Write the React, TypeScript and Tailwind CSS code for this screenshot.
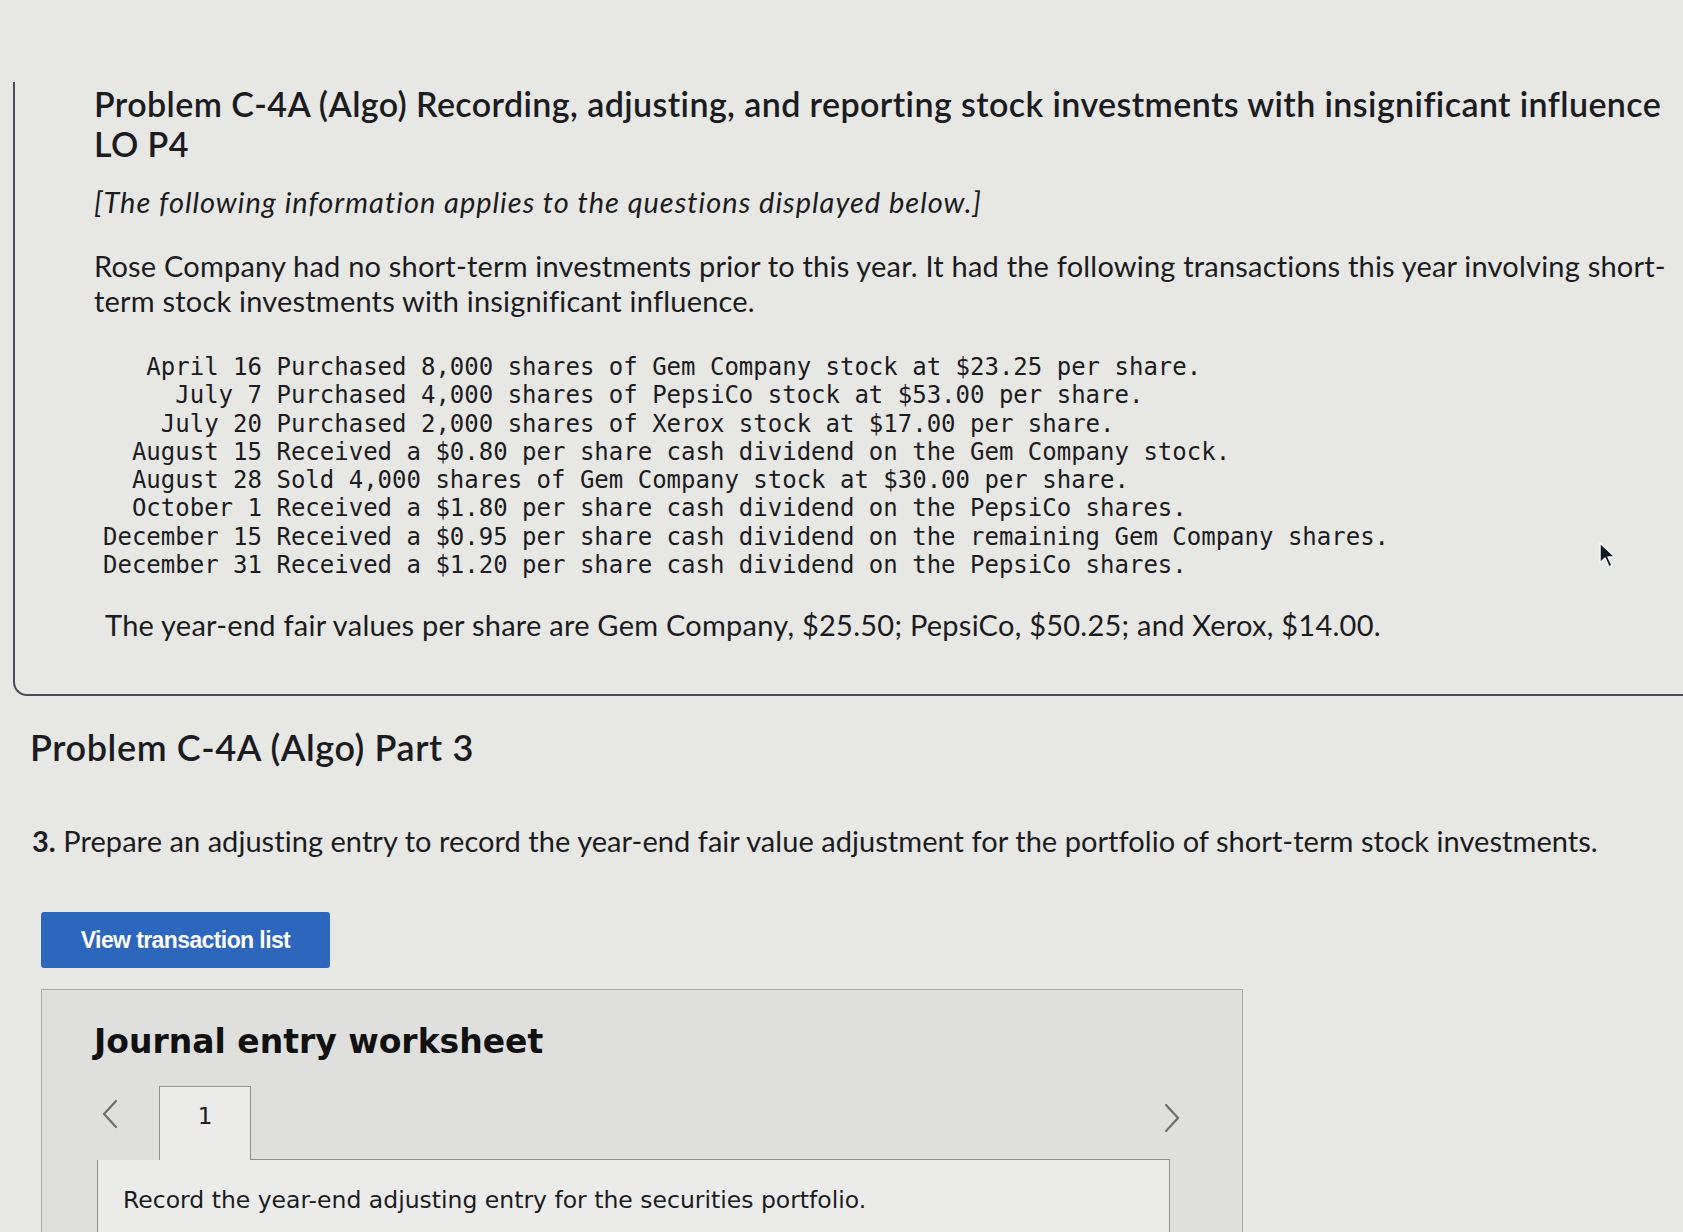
const transactions: [string, string][] = [
  ['April 16', 'Purchased 8,000 shares of Gem Company stock at $23.25 per share.'],
  ['July 7', 'Purchased 4,000 shares of PepsiCo stock at $53.00 per share.'],
  ['July 20', 'Purchased 2,000 shares of Xerox stock at $17.00 per share.'],
  ['August 15', 'Received a $0.80 per share cash dividend on the Gem Company stock.'],
  ['August 28', 'Sold 4,000 shares of Gem Company stock at $30.00 per share.'],
  ['October 1', 'Received a $1.80 per share cash dividend on the PepsiCo shares.'],
  ['December 15', 'Received a $0.95 per share cash dividend on the remaining Gem Company shares.'],
  ['December 31', 'Received a $1.20 per share cash dividend on the PepsiCo shares.'],
]

function Chevron({ dir }: { dir: 'left' | 'right' }) {
  return (
    <svg width="18" height="30" viewBox="0 0 18 30">
      <polyline
        points={dir === 'left' ? '15,2 3,15 15,28' : '3,2 15,15 3,28'}
        fill="none"
        stroke="#6e6e6e"
        strokeWidth="2.2"
        strokeLinecap="round"
        strokeLinejoin="round"
      />
    </svg>
  )
}

function Cursor() {
  return (
    <svg
      className="absolute left-[1598px] top-[541px]"
      width="22"
      height="30"
      viewBox="0 0 22 30"
    >
      <path
        d="M2 2 L2 22 L7 17 L11 26 L14 24.5 L10 16 L17 16 Z"
        fill="#111827"
        stroke="#f5f5f5"
        strokeWidth="1.5"
        strokeLinejoin="round"
      />
    </svg>
  )
}

export default function App() {
  return (
    <div className="relative min-h-screen overflow-hidden bg-[#e7e7e4] pb-10 text-[#1b1b22] font-['Lato','Open_Sans',sans-serif]">
      <Cursor />

      {/* info panel */}
      <div className="ml-[13px] mt-[82px] whitespace-nowrap rounded-bl-[14px] border-b-2 border-l-2 border-[#4b4b5c] pb-[52px] pl-[79px]">
        <h1 className="pt-[2px] text-[34px] font-semibold leading-[40px] tracking-[0.4px]">
          Problem C-4A (Algo) Recording, adjusting, and reporting stock investments with insignificant influence
          <br />
          LO P4
        </h1>

        <p className="mt-[20px] text-[29px] italic leading-[35px] tracking-[1px]">
          [The following information applies to the questions displayed below.]
        </p>

        <p className="mt-[29px] text-[29px] leading-[35px] tracking-[0.2px]">
          Rose Company had no short-term investments prior to this year. It had the following transactions this year involving short-
          <br />
          term stock investments with insignificant influence.
        </p>

        <div className="ml-[9px] mt-[35px] grid w-fit grid-cols-[auto_auto] gap-x-[14.5px] font-['DejaVu_Sans_Mono',monospace] text-[24px] leading-[28.3px]">
          {transactions.map(([date, text]) => (
            <div key={date} className="contents">
              <span className="text-right">{date}</span>
              <span>{text}</span>
            </div>
          ))}
        </div>

        <p className="ml-[11px] mt-[28px] text-[29px] leading-[35px] tracking-[0.25px]">
          The year-end fair values per share are Gem Company, $25.50; PepsiCo, $50.25; and Xerox, $14.00.
        </p>
      </div>

      {/* part 3 */}
      <div className="pl-[30px] pt-[31px]">
        <h2 className="text-[36px] font-semibold leading-[40px] tracking-[0.6px]">Problem C-4A (Algo) Part 3</h2>
        <p className="mt-[56px] whitespace-nowrap pl-[2px] text-[29px] leading-[35px] tracking-[0.05px]">
          <span className="font-bold">3.</span> Prepare an adjusting entry to record the year-end fair value adjustment for the portfolio of short-term stock investments.
        </p>

        <button
          type="button"
          className="ml-[11px] mt-[54px] h-[56px] w-[289px] rounded-[3px] bg-[#2d66bd] font-['Liberation_Sans',Arial,sans-serif] text-[23px] font-bold tracking-[-0.6px] text-white"
        >
          View transaction list
        </button>

        {/* worksheet */}
        <div className="ml-[11px] mt-[21px] w-[1202px] border border-b-0 border-[#a9a9a9] bg-[#dfdfdd] pr-[72px] pl-[55px] pt-[32px] font-['DejaVu_Sans',Verdana,sans-serif]">
          <h3 className="-ml-[3px] text-[33px] font-bold leading-[40px] text-[#111]">Journal entry worksheet</h3>

          <div className="mt-[24px] flex items-end">
            <div className="h-[74px] w-[62px] pl-[4px] pt-[13px]">
              <Chevron dir="left" />
            </div>
            <div className="flex h-[74px] w-[92px] items-start justify-center border-x border-t border-[#8f8f8f] bg-[#ebebe9] pt-[14px] text-[23px] leading-[30px]">
              1
            </div>
            <div className="h-[74px] flex-1 border-b border-[#8f8f8f]" />
          </div>

          <div className="relative border-x border-[#8f8f8f] bg-[#ebebe9] px-[25px] pt-[25px] pb-[40px]">
            <div className="absolute -right-[12px] -top-[57px]">
              <Chevron dir="right" />
            </div>
            <p className="text-[23.5px] leading-[30px]">
              Record the year-end adjusting entry for the securities portfolio.
            </p>
          </div>
        </div>
      </div>
    </div>
  )
}
